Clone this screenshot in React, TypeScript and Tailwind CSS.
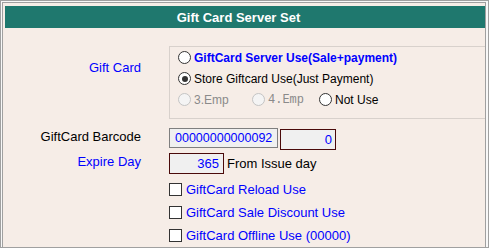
import React from "react";

function Radio({ checked = false, disabled = false }: { checked?: boolean; disabled?: boolean }) {
  return (
    <span
      className={
        disabled
          ? "w-[13px] h-[13px] rounded-full border border-[#c4c4c4] bg-[#f4f4f4] flex items-center justify-center shrink-0"
          : "w-[13px] h-[13px] rounded-full border border-[#333333] bg-white flex items-center justify-center shrink-0"
      }
    >
      {checked && <span className="w-[6px] h-[6px] rounded-full bg-[#333333]" />}
    </span>
  );
}

function Check({ label }: { label: string }) {
  return (
    <div className="h-[23px] flex items-center">
      <span className="w-[13px] h-[13px] border border-[#333333] bg-white shrink-0" />
      <span className="ml-[4px] text-[13px] leading-[15px] text-[#0000ff] whitespace-nowrap">{label}</span>
    </div>
  );
}

export default function App() {
  return (
    <div className="w-[489px] h-[248px] overflow-hidden border border-[#a0a0a0] bg-[#f8f8f8] pl-px pt-px font-['Liberation_Sans',Arial,sans-serif]">
      <div className="w-[484px] h-[260px] border-l border-t border-r border-[#a0a0a0] bg-[#f6ede7] pt-[3px]">
        <div className="ml-[2px] h-[22px] bg-[#1f786e] flex items-center justify-center pr-[13px] text-white font-bold text-[13px] leading-[15px]">
          Gift Card Server Set
        </div>

        {/* Gift Card group */}
        <div className="mt-[18px] flex">
          <div className="w-[138px] shrink-0 text-right mt-[14px] text-[13px] leading-[15px] text-[#0000ff]">Gift Card</div>
          <div className="ml-[28px] flex-1 h-[73px] border-t border-b border-l border-[#d8d1cc] pl-[8px] flex flex-col">
            <div className="h-[21px] flex items-center">
              <Radio />
              <span className="ml-[3px] text-[12px] leading-[14px] font-bold text-[#0000ff] whitespace-nowrap">
                GiftCard Server Use(Sale+payment)
              </span>
            </div>
            <div className="h-[21px] flex items-center">
              <Radio checked />
              <span className="ml-[3px] text-[12px] leading-[14px] text-black whitespace-nowrap">
                Store Giftcard Use(Just Payment)
              </span>
            </div>
            <div className="h-[21px] flex items-center">
              <div className="w-[74px] flex items-center">
                <Radio disabled />
                <span className="ml-[3px] text-[12px] leading-[14px] text-[#8a8a8a]">3.Emp</span>
              </div>
              <div className="w-[67px] flex items-center">
                <Radio disabled />
                <span className="ml-[3px] text-[12px] leading-[14px] text-[#8a8a8a] font-['Liberation_Mono','Courier_New',monospace]">
                  4.Emp
                </span>
              </div>
              <div className="flex items-center">
                <Radio />
                <span className="ml-[3px] text-[12px] leading-[14px] text-black whitespace-nowrap">Not Use</span>
              </div>
            </div>
          </div>
        </div>

        {/* Barcode row */}
        <div className="mt-[9px] flex items-start h-[22px]">
          <div className="w-[138px] shrink-0 text-right mt-[1px] text-[13px] leading-[15px] text-black">GiftCard Barcode</div>
          <div className="ml-[28px] flex items-start">
            <div className="w-[109px] h-[20px] border border-[#7f7f7f] bg-[#f0f0f0] pl-[5px] flex items-center text-[12.5px] leading-[14px] text-[#0000ff]">
              00000000000092
            </div>
            <div className="ml-[2px] mt-[1px] w-[56px] h-[21px] border border-[#4a0a0a] bg-[#f0f0f0] pr-[3px] flex items-center justify-end text-[13px] leading-[14px] text-[#0000ff]">
              0
            </div>
          </div>
        </div>

        {/* Expire row */}
        <div className="mt-[3px] flex items-start h-[21px]">
          <div className="w-[138px] shrink-0 text-right mt-[1px] text-[13px] leading-[15px] text-[#0000ff]">Expire Day</div>
          <div className="ml-[28px] flex items-center h-[21px]">
            <div className="w-[55px] h-[21px] border border-[#4a0a0a] bg-[#f0f0f0] pr-[4px] flex items-center justify-end text-[13px] leading-[14px] text-[#0000ff]">
              365
            </div>
            <span className="ml-[3px] text-[13px] leading-[15px] text-black whitespace-nowrap">From Issue day</span>
          </div>
        </div>

        {/* Checkboxes */}
        <div className="mt-[4px] ml-[166px] flex flex-col">
          <Check label="GiftCard Reload Use" />
          <Check label="GiftCard Sale Discount Use" />
          <Check label="GiftCard Offline Use (00000)" />
        </div>
      </div>
    </div>
  );
}
